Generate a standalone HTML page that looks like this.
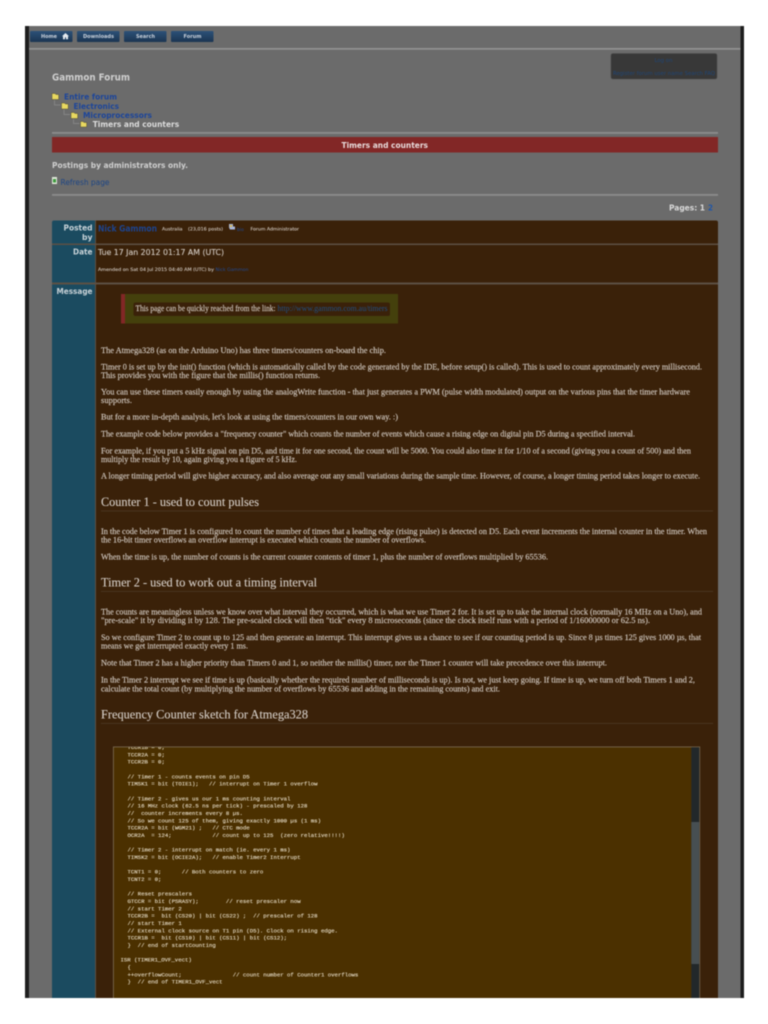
<!DOCTYPE html>
<html lang="en"><head><meta charset="utf-8"><title>Timers and counters</title>
<style>
html,body{margin:0;padding:0;background:#fff;width:768px;height:1024px;overflow:hidden}
svg{display:block}
#m{filter:blur(.5px)}
.b text{font-family:"Liberation Serif",serif;font-size:8.6px;fill:#d2cac2;stroke:#d2cac2;stroke-width:.14px}
.h text{font-family:"Liberation Serif",serif;font-size:13px;fill:#d6cfc8;stroke:#d6cfc8;stroke-width:.1px}
.d{font-family:"DejaVu Sans",sans-serif;font-weight:bold;font-size:8.2px;fill:#cfcfcf}
.l text{font-family:"DejaVu Sans",sans-serif;font-weight:bold;font-size:8.2px;fill:#c9d3d8}
.s text,text.s{font-family:"DejaVu Sans",sans-serif;font-size:4.6px;fill:#d5cdc5;stroke:#d5cdc5;stroke-width:.08px}
.n text{font-family:"DejaVu Sans",sans-serif;font-size:5px;font-weight:bold;fill:#c8d0da}
.c text{font-family:"Liberation Mono",monospace;font-size:5.67px;fill:#e6dcc6;stroke:#e6dcc6;stroke-width:.12px;white-space:pre}
</style></head><body>
<svg id="m" width="768" height="1024" viewBox="0 0 768 1024" xmlns="http://www.w3.org/2000/svg">
<rect x="25" y="26" width="719" height="972" fill="#6b6b6b"/>
<rect x="25" y="26" width="4" height="972" fill="#1e1e1e"/>
<rect x="740.500" y="26" width="3.500" height="972" fill="#1e1e1e"/>
<defs><linearGradient id="g" x1="0" y1="0" x2="0" y2="1"><stop offset="0" stop-color="#2c5178"/><stop offset="1" stop-color="#1b3552"/></linearGradient></defs>
<g fill="url(#g)"><rect x="30" y="31" width="42.500" height="11" rx="1"/><rect x="77" y="31" width="42.500" height="11" rx="1"/><rect x="124" y="31" width="42.500" height="11" rx="1"/><rect x="171" y="31" width="42.500" height="11" rx="1"/></g>
<g class="n"><text x="41" y="38" textLength="16" lengthAdjust="spacingAndGlyphs">Home</text><text x="83" y="38" textLength="31" lengthAdjust="spacingAndGlyphs">Downloads</text><text x="136" y="38" textLength="19" lengthAdjust="spacingAndGlyphs">Search</text><text x="183.500" y="38" textLength="18" lengthAdjust="spacingAndGlyphs">Forum</text></g>
<path d="M65.500 33l-3.500 3.200h1v3h2v-2h1v2h2v-3h1z" fill="#e6ebf0"/>
<rect x="29" y="48" width="711.500" height="1.700" fill="#929292"/>
<rect x="611" y="53.500" width="106" height="25.500" rx="2" fill="#383838" stroke="#4c4c4c" stroke-width=".6"/>
<text x="654.500" y="62" font-family="DejaVu Sans,sans-serif" font-size="4.800" fill="#1f4678" textLength="18" lengthAdjust="spacingAndGlyphs">Log on</text>
<text x="613" y="75" font-family="DejaVu Sans,sans-serif" font-size="4.800" fill="#1f4678" textLength="102" lengthAdjust="spacingAndGlyphs">Register forum user name Search FAQ</text>
<text x="52" y="80.500" class="d" style="font-size:9.400px" textLength="78" lengthAdjust="spacingAndGlyphs">Gammon Forum</text>
<g stroke="#8d8d8d" stroke-width=".7" fill="none"><path d="M54.500 100v5h6M64 109.500v5h6M73.500 119v4.500h6"/></g>
<g fill="#e8d860" stroke="#3c3a2a" stroke-width=".4"><path d="M52 93.500h3l1 1h2.700v5H52z"/><path d="M61.500 103h3l1 1h2.700v5h-6.700z"/><path d="M71 112.500h3l1 1h2.700v5H71z"/><path d="M80.500 121.500h2.500l1 1h2.700v4.500h-6.200z"/></g>
<g><text class="d" x="64" y="99.500" style="fill:#1c459a" textLength="53" lengthAdjust="spacingAndGlyphs">Entire forum</text><text class="d" x="73.500" y="108.800" style="fill:#1c459a" textLength="45.500" lengthAdjust="spacingAndGlyphs">Electronics</text><text class="d" x="83" y="118" style="fill:#1c459a" textLength="69" lengthAdjust="spacingAndGlyphs">Microprocessors</text><text class="d" x="92.700" y="127" style="fill:#dcdcdc" textLength="86.500" lengthAdjust="spacingAndGlyphs">Timers and counters</text></g>
<rect x="52" y="132" width="666" height="1.800" fill="#8c8c8c"/>
<rect x="52" y="137" width="666" height="15.500" fill="#822726"/>
<text x="341.500" y="148" class="d" style="fill:#e8dcdc" textLength="86.500" lengthAdjust="spacingAndGlyphs">Timers and counters</text>
<text x="52" y="168" class="d" textLength="136" lengthAdjust="spacingAndGlyphs">Postings by administrators only.</text>
<rect x="52" y="177" width="5" height="7" fill="#dfe8d8"/><rect x="53" y="179" width="3" height="3.500" fill="#3f9a3f"/>
<text x="60.500" y="185" font-family="DejaVu Sans,sans-serif" font-size="8" fill="#1c4585" textLength="49" lengthAdjust="spacingAndGlyphs">Refresh page</text>
<rect x="52" y="194" width="666" height="1.800" fill="#8c8c8c"/>
<text x="669" y="210.500" class="d" style="fill:#dadada" textLength="36" lengthAdjust="spacingAndGlyphs">Pages: 1</text>
<text x="708" y="210.500" class="d" style="fill:#1f56a8" textLength="5" lengthAdjust="spacingAndGlyphs">2</text>
<g fill="#1b4b60"><path d="M54 220.500h41v23H52v-21a2 2 0 0 1 2-2z"/><rect x="52" y="245" width="43" height="37.500"/><rect x="52" y="284.500" width="43" height="713.500"/></g>
<g fill="#3a2109"><path d="M96 220.500h620a2 2 0 0 1 2 2v21H96z"/><rect x="96" y="245" width="622" height="37.500"/><rect x="96" y="284.500" width="622" height="713.500"/></g>
<g fill="#5c5044"><rect x="52" y="243.500" width="666" height="1.500"/><rect x="52" y="282.500" width="666" height="2"/><rect x="95" y="220.500" width="1" height="777.500"/></g>
<g class="l"><text x="63.500" y="230.500" textLength="29" lengthAdjust="spacingAndGlyphs">Posted</text><text x="82" y="240" textLength="10.500" lengthAdjust="spacingAndGlyphs">by</text><text x="73" y="254.500" textLength="19.500" lengthAdjust="spacingAndGlyphs">Date</text><text x="56.500" y="294" textLength="36" lengthAdjust="spacingAndGlyphs">Message</text></g>
<text x="98" y="231.500" class="d" style="fill:#1c4490;font-size:9px" textLength="59" lengthAdjust="spacingAndGlyphs">Nick Gammon</text>
<g class="s"><text x="162" y="230.500" textLength="20.500" lengthAdjust="spacingAndGlyphs">Australia</text><text x="188" y="230.500" textLength="35" lengthAdjust="spacingAndGlyphs">(23,016 posts)</text><text x="250.500" y="230.500" textLength="48.500" lengthAdjust="spacingAndGlyphs">Forum Administrator</text></g>
<path d="M229 224h4v2.500h2v3h-5l-1-2z" fill="#a7b5d8"/><rect x="230" y="225" width="2" height="2" fill="#d8b64a"/>
<text x="237" y="231" font-family="DejaVu Sans,sans-serif" font-size="4.500" fill="#1f4a96">bio</text>
<text x="98" y="255" font-family="DejaVu Sans,sans-serif" font-size="8.200" fill="#d5cdc5" stroke="#d5cdc5" stroke-width=".1" textLength="126" lengthAdjust="spacingAndGlyphs">Tue 17 Jan 2012 01:17 AM (UTC)</text>
<text x="98" y="271" class="s" textLength="116" lengthAdjust="spacingAndGlyphs">Amended on Sat 04 Jul 2015 04:40 AM (UTC) by</text>
<text x="215.500" y="271" font-family="DejaVu Sans,sans-serif" font-size="4.600" fill="#1f4a96" textLength="33" lengthAdjust="spacingAndGlyphs">Nick Gammon</text>
<rect x="121" y="294" width="277" height="29.500" fill="#44400c"/><rect x="121" y="294" width="4" height="29.500" fill="#822726"/>
<rect x="133.500" y="302.500" width="256.500" height="13.500" rx="2" fill="#3a2109"/>
<g class="b"><text x="135.500" y="311" textLength="140" lengthAdjust="spacingAndGlyphs">This page can be quickly reached from the link:</text>
<text x="277.500" y="311" style="fill:#1f4f86;stroke:none" textLength="110" lengthAdjust="spacingAndGlyphs">http://www.gammon.com.au/timers</text>
<text x="101" y="353" textLength="285" lengthAdjust="spacingAndGlyphs">The Atmega328 (as on the Arduino Uno) has three timers/counters on-board the chip.</text>
<text x="101" y="369.500" textLength="601" lengthAdjust="spacingAndGlyphs">Timer 0 is set up by the init() function (which is automatically called by the code generated by the IDE, before setup() is called). This is used to count approximately every millisecond.</text>
<text x="101" y="378" textLength="219" lengthAdjust="spacingAndGlyphs">This provides you with the figure that the millis() function returns.</text>
<text x="101" y="394.500" textLength="589" lengthAdjust="spacingAndGlyphs">You can use these timers easily enough by using the analogWrite function - that just generates a PWM (pulse width modulated) output on the various pins that the timer hardware</text>
<text x="101" y="403" textLength="31" lengthAdjust="spacingAndGlyphs">supports.</text>
<text x="101" y="419.500" textLength="297" lengthAdjust="spacingAndGlyphs">But for a more in-depth analysis, let's look at using the timers/counters in our own way. :)</text>
<text x="101" y="436.500" textLength="534" lengthAdjust="spacingAndGlyphs">The example code below provides a "frequency counter" which counts the number of events which cause a rising edge on digital pin D5 during a specified interval.</text>
<text x="101" y="453.500" textLength="590" lengthAdjust="spacingAndGlyphs">For example, if you put a 5 kHz signal on pin D5, and time it for one second, the count will be 5000. You could also time it for 1/10 of a second (giving you a count of 500) and then</text>
<text x="101" y="462" textLength="196" lengthAdjust="spacingAndGlyphs">multiply the result by 10, again giving you a figure of 5 kHz.</text>
<text x="101" y="478.500" textLength="599" lengthAdjust="spacingAndGlyphs">A longer timing period will give higher accuracy, and also average out any small variations during the sample time. However, of course, a longer timing period takes longer to execute.</text>
<text x="101" y="534" textLength="606" lengthAdjust="spacingAndGlyphs">In the code below Timer 1 is configured to count the number of times that a leading edge (rising pulse) is detected on D5. Each event increments the internal counter in the timer. When</text>
<text x="101" y="542.500" textLength="325" lengthAdjust="spacingAndGlyphs">the 16-bit timer overflows an overflow interrupt is executed which counts the number of overflows.</text>
<text x="101" y="559.500" textLength="447" lengthAdjust="spacingAndGlyphs">When the time is up, the number of counts is the current counter contents of timer 1, plus the number of overflows multiplied by 65536.</text>
<text x="101" y="614.500" textLength="601" lengthAdjust="spacingAndGlyphs">The counts are meaningless unless we know over what interval they occurred, which is what we use Timer 2 for. It is set up to take the internal clock (normally 16 MHz on a Uno), and</text>
<text x="101" y="623" textLength="549" lengthAdjust="spacingAndGlyphs">"pre-scale" it by dividing it by 128. The pre-scaled clock will then "tick" every 8 microseconds (since the clock itself runs with a period of 1/16000000 or 62.5 ns).</text>
<text x="101" y="640" textLength="600" lengthAdjust="spacingAndGlyphs">So we configure Timer 2 to count up to 125 and then generate an interrupt. This interrupt gives us a chance to see if our counting period is up. Since 8 µs times 125 gives 1000 µs, that</text>
<text x="101" y="648.500" textLength="147" lengthAdjust="spacingAndGlyphs">means we get interrupted exactly every 1 ms.</text>
<text x="101" y="665.500" textLength="506" lengthAdjust="spacingAndGlyphs">Note that Timer 2 has a higher priority than Timers 0 and 1, so neither the millis() timer, nor the Timer 1 counter will take precedence over this interrupt.</text>
<text x="101" y="682.500" textLength="594" lengthAdjust="spacingAndGlyphs">In the Timer 2 interrupt we see if time is up (basically whether the required number of milliseconds is up). Is not, we just keep going. If time is up, we turn off both Timers 1 and 2,</text>
<text x="101" y="691.500" textLength="399" lengthAdjust="spacingAndGlyphs">calculate the total count (by multiplying the number of overflows by 65536 and adding in the remaining counts) and exit.</text>
</g>
<g class="h">
<text x="101" y="506" textLength="158" lengthAdjust="spacingAndGlyphs">Counter 1 - used to count pulses</text>
<text x="101" y="586.500" textLength="216" lengthAdjust="spacingAndGlyphs">Timer 2 - used to work out a timing interval</text>
<text x="101" y="718.500" textLength="207" lengthAdjust="spacingAndGlyphs">Frequency Counter sketch for Atmega328</text>
</g>
<g fill="#4d3a27"><rect x="101" y="510.500" width="612" height=".8"/><rect x="101" y="591" width="612" height=".8"/><rect x="101" y="723" width="612" height=".8"/></g>
<rect x="113" y="746.500" width="587" height="251.500" fill="#4b3000"/>
<rect x="113" y="746.500" width="587" height=".8" fill="#7d6c55"/><rect x="113" y="746.500" width=".8" height="251.500" fill="#7d6c55"/><rect x="699.300" y="746.500" width=".8" height="251.500" fill="#7d6c55"/>
<rect x="691.300" y="747.300" width="8" height="250.700" fill="#22282a"/><rect x="691.300" y="822" width="8" height="142" fill="#474f52"/>
<svg x="114" y="747.300" width="577" height="250.700" viewBox="114 747.300 577 250.700">
<g class="c">
<text x="127.500" y="749">TCCR1B = 0;</text>
<text x="127.500" y="756.300">TCCR2A = 0;</text>
<text x="127.500" y="763.700">TCCR2B = 0;</text>
<text x="127.500" y="778.300">// Timer 1 - counts events on pin D5</text>
<text x="127.500" y="785.700">TIMSK1 = bit (TOIE1);   // interrupt on Timer 1 overflow</text>
<text x="127.500" y="800.300">// Timer 2 - gives us our 1 ms counting interval</text>
<text x="127.500" y="807.700">// 16 MHz clock (62.5 ns per tick) - prescaled by 128</text>
<text x="127.500" y="815">//  counter increments every 8 µs.</text>
<text x="127.500" y="822.300">// So we count 125 of them, giving exactly 1000 µs (1 ms)</text>
<text x="127.500" y="829.700">TCCR2A = bit (WGM21) ;   // CTC mode</text>
<text x="127.500" y="837">OCR2A  = 124;            // count up to 125  (zero relative!!!!)</text>
<text x="127.500" y="851.700">// Timer 2 - interrupt on match (ie. every 1 ms)</text>
<text x="127.500" y="859">TIMSK2 = bit (OCIE2A);   // enable Timer2 Interrupt</text>
<text x="127.500" y="873.700">TCNT1 = 0;      // Both counters to zero</text>
<text x="127.500" y="881">TCNT2 = 0;</text>
<text x="127.500" y="895.700">// Reset prescalers</text>
<text x="127.500" y="903">GTCCR = bit (PSRASY);        // reset prescaler now</text>
<text x="127.500" y="910.300">// start Timer 2</text>
<text x="127.500" y="917.700">TCCR2B =  bit (CS20) | bit (CS22) ;  // prescaler of 128</text>
<text x="127.500" y="925">// start Timer 1</text>
<text x="127.500" y="932.300">// External clock source on T1 pin (D5). Clock on rising edge.</text>
<text x="127.500" y="939.700">TCCR1B =  bit (CS10) | bit (CS11) | bit (CS12);</text>
<text x="127.500" y="947">}  // end of startCounting</text>
<text x="120.500" y="961.700">ISR (TIMER1_OVF_vect)</text>
<text x="127.500" y="969">{</text>
<text x="127.500" y="976.300">++overflowCount;               // count number of Counter1 overflows</text>
<text x="127.500" y="983.700">}  // end of TIMER1_OVF_vect</text>
</g>
</svg>
</svg>
</body></html>
